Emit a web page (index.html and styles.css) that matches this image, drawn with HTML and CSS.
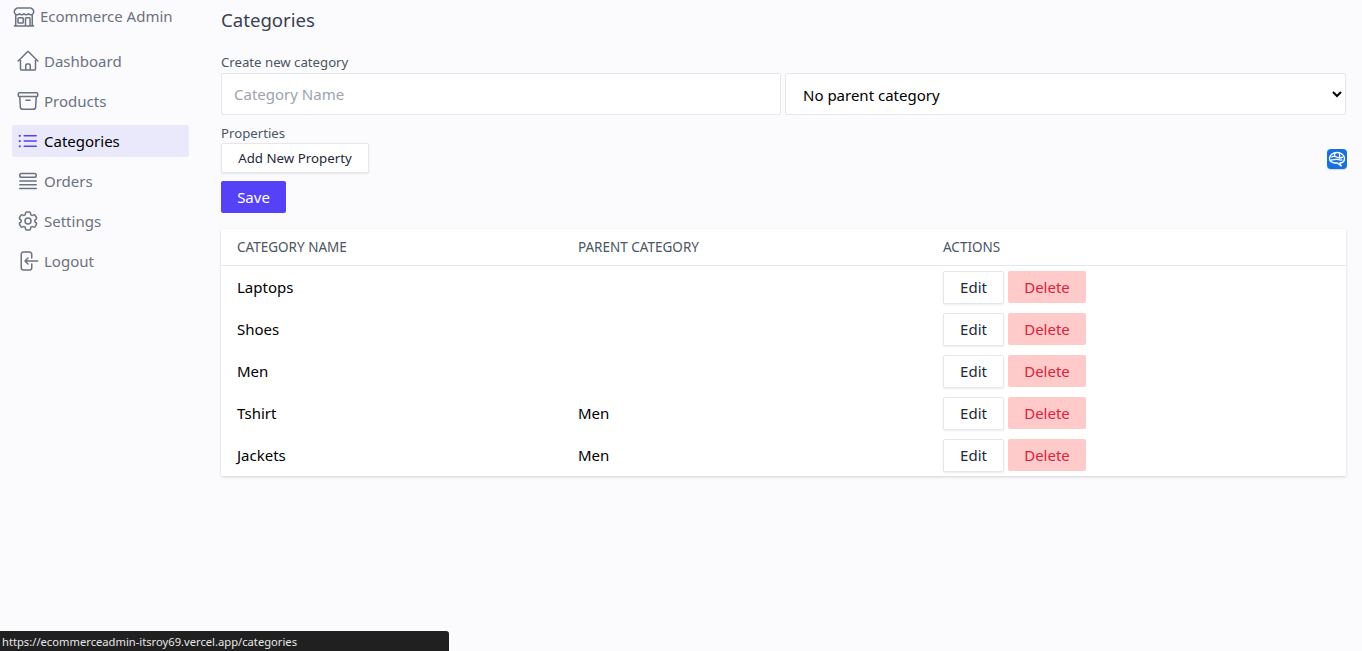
FILE: index.html
```html
<!DOCTYPE html>
<html lang="en">
<head>
<meta charset="utf-8">
<title>Categories</title>
<link rel="stylesheet" href="styles.css">
</head>
<body>
<div class="app">
  <aside class="sidebar">
    <div class="logo">
      <svg class="logo-icon" viewBox="0 0 24 24" fill="none" stroke="currentColor" stroke-width="1.5" stroke-linecap="round" stroke-linejoin="round"><path d="M13.5 21v-7.5a.75.75 0 0 1 .75-.75h3a.75.75 0 0 1 .75.75V21m-4.5 0H2.36m11.14 0H18m0 0h3.64m-1.39 0V9.349m-16.5 11.65V9.35m0 0a3.001 3.001 0 0 0 3.75-.615A2.993 2.993 0 0 0 9.75 9.75c.896 0 1.7-.393 2.25-1.016a2.993 2.993 0 0 0 2.25 1.016c.896 0 1.7-.393 2.25-1.016a3.001 3.001 0 0 0 3.75.614m-16.5 0a3.004 3.004 0 0 1-.621-4.72L4.318 3.44A1.5 1.5 0 0 1 5.378 3h13.243a1.5 1.5 0 0 1 1.06.44l1.19 1.189a3 3 0 0 1-.621 4.72m-13.5 8.65h3.75a.75.75 0 0 0 .75-.75V13.5a.75.75 0 0 0-.75-.75H6.75a.75.75 0 0 0-.75.75v3.75c0 .415.336.75.75.75Z"/></svg>
      <span class="logo-text">Ecommerce Admin</span>
    </div>
    <nav class="nav">
      <a class="nav-item"><svg class="nav-icon" viewBox="0 0 24 24" fill="none" stroke="currentColor" stroke-width="1.5" stroke-linecap="round" stroke-linejoin="round"><path d="m2.25 12 8.954-8.955c.44-.439 1.152-.439 1.591 0L21.75 12M4.5 9.750v10.125c0 .621.504 1.125 1.125 1.125H9.750v-4.875c0-.621.504-1.125 1.125-1.125h2.250c.621 0 1.125.504 1.125 1.125V21h4.125c.621 0 1.125-.504 1.125-1.125V9.750M8.250 21h8.250"/></svg>Dashboard</a>
      <a class="nav-item"><svg class="nav-icon" viewBox="0 0 24 24" fill="none" stroke="currentColor" stroke-width="1.5" stroke-linecap="round" stroke-linejoin="round"><path d="m20.25 7.5-.625 10.632a2.25 2.25 0 0 1-2.247 2.118H6.622a2.25 2.25 0 0 1-2.247-2.118L3.75 7.5M10 11.25h4M3.375 7.5h17.25c.621 0 1.125-.504 1.125-1.125v-1.5c0-.621-.504-1.125-1.125-1.125H3.375c-.621 0-1.125.504-1.125 1.125v1.5c0 .621.504 1.125 1.125 1.125Z"/></svg>Products</a>
      <a class="nav-item active"><svg class="nav-icon" viewBox="0 0 24 24" fill="none" stroke="currentColor" stroke-width="1.5" stroke-linecap="round" stroke-linejoin="round"><path d="M8.25 6.75h12M8.25 12h12m-12 5.25h12M3.75 6.75h.007v.008H3.75V6.75Zm.375 0a.375.375 0 1 1-.75 0 .375.375 0 0 1 .75 0ZM3.75 12h.007v.008H3.75V12Zm.375 0a.375.375 0 1 1-.75 0 .375.375 0 0 1 .75 0Zm-.375 5.25h.007v.008H3.75v-.008Zm.375 0a.375.375 0 1 1-.75 0 .375.375 0 0 1 .75 0Z"/></svg>Categories</a>
      <a class="nav-item"><svg class="nav-icon" viewBox="0 0 24 24" fill="none" stroke="currentColor" stroke-width="1.5" stroke-linecap="round" stroke-linejoin="round"><path d="M3.75 12h16.5m-16.5 3.75h16.5M3.75 19.5h16.5M5.625 4.5h12.75a1.875 1.875 0 0 1 0 3.75H5.625a1.875 1.875 0 0 1 0-3.75Z"/></svg>Orders</a>
      <a class="nav-item"><svg class="nav-icon" viewBox="0 0 24 24" fill="none" stroke="currentColor" stroke-width="1.5" stroke-linecap="round" stroke-linejoin="round"><path d="M9.594 3.94c.09-.542.56-.94 1.11-.94h2.593c.55 0 1.02.398 1.11.94l.213 1.281c.063.374.313.686.645.87.074.04.147.083.22.127.325.196.72.257 1.075.124l1.217-.456a1.125 1.125 0 0 1 1.37.49l1.296 2.247a1.125 1.125 0 0 1-.26 1.431l-1.003.827c-.293.241-.438.613-.43.992a7.723 7.723 0 0 1 0 .255c-.008.378.137.75.43.991l1.004.827c.424.35.534.955.26 1.43l-1.298 2.247a1.125 1.125 0 0 1-1.369.491l-1.217-.456c-.355-.133-.75-.072-1.076.124a6.47 6.47 0 0 1-.22.128c-.331.183-.581.495-.644.869l-.213 1.281c-.09.543-.56.94-1.11.94h-2.594c-.55 0-1.019-.398-1.11-.94l-.213-1.281c-.062-.374-.312-.686-.644-.87a6.52 6.52 0 0 1-.22-.127c-.325-.196-.72-.257-1.076-.124l-1.217.456a1.125 1.125 0 0 1-1.369-.49l-1.297-2.247a1.125 1.125 0 0 1 .26-1.431l1.004-.827c.292-.24.437-.613.43-.991a6.932 6.932 0 0 1 0-.255c.007-.38-.138-.751-.43-.992l-1.004-.827a1.125 1.125 0 0 1-.26-1.43l1.297-2.247a1.125 1.125 0 0 1 1.37-.491l1.216.456c.356.133.751.072 1.076-.124.072-.044.146-.086.22-.128.332-.183.582-.495.644-.869l.214-1.28Z"/><path d="M15 12a3 3 0 1 1-6 0 3 3 0 0 1 6 0Z"/></svg>Settings</a>
      <a class="nav-item"><svg class="nav-icon" viewBox="0 0 24 24" fill="none" stroke="currentColor" stroke-width="1.5" stroke-linecap="round" stroke-linejoin="round"><path d="M15.75 9V5.25A2.25 2.25 0 0 0 13.5 3h-6a2.25 2.25 0 0 0-2.25 2.25v13.5A2.25 2.25 0 0 0 7.5 21h6a2.25 2.25 0 0 0 2.25-2.25V15M12 9l-3 3m0 0 3 3m-3-3h12.75"/></svg>Logout</a>
    </nav>
  </aside>
  <main class="main">
    <h1 class="title">Categories</h1>
    <label class="label">Create new category</label>
    <div class="fields">
      <input class="input" type="text" placeholder="Category Name">
      <select class="select"><option>No parent category</option></select>
    </div>
    <label class="label">Properties</label>
    <button class="btn add-btn">Add New Property</button>
    <button class="btn-primary">Save</button>
    <table class="table">
      <thead>
        <tr><th class="col-name">Category Name</th><th class="col-parent">Parent Category</th><th>Actions</th></tr>
      </thead>
      <tbody>
        <tr><td>Laptops</td><td></td><td><div class="actions"><button class="btn edit">Edit</button><button class="btn-red">Delete</button></div></td></tr>
        <tr><td>Shoes</td><td></td><td><div class="actions"><button class="btn edit">Edit</button><button class="btn-red">Delete</button></div></td></tr>
        <tr><td>Men</td><td></td><td><div class="actions"><button class="btn edit">Edit</button><button class="btn-red">Delete</button></div></td></tr>
        <tr><td>Tshirt</td><td>Men</td><td><div class="actions"><button class="btn edit">Edit</button><button class="btn-red">Delete</button></div></td></tr>
        <tr><td>Jackets</td><td>Men</td><td><div class="actions"><button class="btn edit">Edit</button><button class="btn-red">Delete</button></div></td></tr>
      </tbody>
    </table>
  </main>
</div>
<div class="ext-badge">
  <svg viewBox="0 0 20 20" fill="none" stroke="#fff" stroke-width="1.3" stroke-linecap="round" stroke-linejoin="round"><path d="M2.500 9.500C2.500 6 6 3.500 10 3.500s7.500 2.500 7.500 6c0 2.500-2 4.300-4.700 4.500l1.400 3-3.900-3H8C5 14 2.500 12.300 2.500 9.500Z"/><path d="M4.500 8c2-1.200 3.800-.7 5.500.3s3.500 1 5.500-.2M4 11c2 .3 3.700-.7 5.500-.7s3.300 1.200 5.500.6M8 4.500c-.7 1-.7 2 0 3M12.500 5c.5 1 .3 2-.3 3.300"/></svg>
</div>
<div class="status">https://ecommerceadmin-itsroy69.vercel.app/categories</div>
</body>
</html>
```

FILE: styles.css
```css
* { box-sizing: border-box; }
html, body { margin: 0; height: 100%; }
body {
  background: #fbfafd;
  color: #1e293b;
  font-family: "Noto Sans", "Open Sans", sans-serif;
  font-size: 15px;
  overflow: hidden;
}
.app { display: flex; min-height: 651px; }
.sidebar { width: 205px; padding: 7px 16px 0 12px; color: #6b7280; flex: none; }
.logo { display: flex; align-items: center; gap: 4px; height: 20px; margin: 0 0 18px; line-height: 20px; }
.logo-text { padding-bottom: 2px; }
.logo-icon { width: 24px; height: 24px; flex: none; }
.nav { display: flex; flex-direction: column; gap: 8px; }
.nav-item { display: flex; align-items: center; gap: 4px; height: 32px; padding: 0 4px; border-radius: 2px; }
.nav-item.active { background: #eae8fb; color: #000; }
.nav-item.active .nav-icon { color: #5542f6; }
.nav-icon { width: 24px; height: 24px; flex: none; }
.main { flex: 1; padding: 6px 16px 0; min-width: 0; }
.title { margin: 0 0 18px; font-size: 18.6px; font-weight: 400; color: #374151; line-height: 28px; }
.label { display: block; font-size: 13.2px; line-height: 20px; color: #4b5563; }
.fields { display: flex; gap: 4px; height: 42px; margin-bottom: 8px; margin-top: 1px; }
.input, .select {
  border: 1px solid #e5e5ea;
  border-radius: 2px;
  background: #fff;
  font: inherit;
  height: 42px;
  flex: 1;
  min-width: 0;
  padding: 0 12px;
}
.input::placeholder { color: #9ca3af; opacity: 1; }
.select { color: #000; padding-left: 13px; padding-top: 2px; }
.btn {
  background: #fff;
  border: 1px solid #e5e7eb;
  border-radius: 2px;
  box-shadow: 0 1px 2px rgba(0,0,0,.08);
  color: #000;
  font: inherit;
  font-size: 13.3px;
  padding: 0 16px;
}
.add-btn { display: block; height: 30px; width: 148px; margin-bottom: 8px; padding: 0; color: #1e293b; }
.btn-primary {
  display: block;
  background: #5542f6;
  border: 0;
  border-radius: 2px;
  color: #fff;
  font: inherit;
  height: 32px;
  width: 65px;
  margin-bottom: 16px;
}
.table {
  width: 100%;
  border-collapse: separate;
  border-spacing: 0;
  background: #fff;
  box-shadow: 0 1px 3px rgba(0,0,0,.16);
  border-radius: 2px;
  table-layout: fixed;
}
.table th {
  text-align: left;
  font-weight: 400;
  font-size: 13.5px;
  text-transform: uppercase;
  color: #4b5563;
  height: 37px;
  padding: 0 16px;
  border-bottom: 1px solid #e5e7eb;
}
.col-name { width: 341px; }
.col-parent { width: 365px; }
.table td { padding: 0 16px; height: 42px; color: #000; }
.actions { display: flex; gap: 4px; padding-top: 1px; }
.edit { width: 61px; height: 33px; font-size: 15px; padding: 0 0 2px; color: #1e293b; }
.btn-red {
  width: 78px;
  height: 32px;
  border: 0;
  border-radius: 2px;
  background: #fecaca;
  color: #e0203a;
  font: inherit;
  padding: 0;
}
.ext-badge { position: absolute; left: 1327px; top: 149px; width: 20px; height: 20px; border-radius: 4px; background: #1a6fe0; display: flex; box-shadow: 0 1px 1px rgba(0,0,0,.15); }
.ext-badge svg { width: 20px; height: 20px; }
.status {
  position: absolute;
  left: 0;
  bottom: 0;
  width: 449px;
  height: 20px;
  padding-left: 2px;
  background: #202020;
  color: #e8e8e8;
  font-size: 11.2px;
  line-height: 22px;
  border-top-right-radius: 3px;
}
```
